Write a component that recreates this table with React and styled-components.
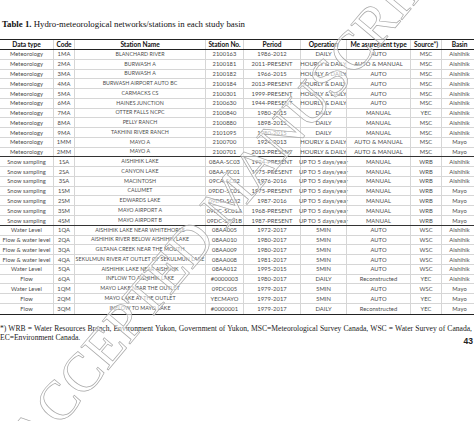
import React from 'react';
import styled, { createGlobalStyle } from 'styled-components';

const GlobalStyle = createGlobalStyle`
	html, body {
		margin: 0;
		padding: 0;
		background: #ffffff;
	}
`;

const Page = styled.div`
	position: relative;
	width: 474px;
	height: 421px;
	overflow: hidden;
	background: #ffffff;
	padding-top: 19px;
	box-sizing: border-box;
`;

const Caption = styled.div`
	font-family: "Liberation Serif", "Times New Roman", serif;
	font-size: 8.8px;
	line-height: 11px;
	color: #111;
	padding-left: 2px;
	margin-bottom: 9px;

	b {
		font-weight: bold;
	}
`;

const Table = styled.div`
	width: 477px;
	border-top: 1px solid #222;
	border-bottom: 1.5px solid #222;
`;

const cols = '53px 21px 131px 38px 57px 46px 64px 31px 36px';

const Row = styled.div`
	display: grid;
	grid-template-columns: ${cols};
	height: ${(p) => (p.$head ? '10px' : '9.78px')};
	box-sizing: border-box;
	border-bottom: ${(p) =>
		p.$head ? '1px solid #222' : p.$thick ? '1.5px solid #333' : '1px solid #d6d6d6'};
	&:last-child {
		border-bottom: none;
	}
`;

const Cell = styled.div`
	display: flex;
	align-items: center;
	justify-content: center;
	white-space: nowrap;
	overflow: visible;
	border-left: ${(p) => (p.$first ? 'none' : '1px solid #d6d6d6')};
	font-family: Lato, "Liberation Sans", Arial, sans-serif;
	font-size: ${(p) => (p.$head ? '6.6px' : p.$caps ? '5.3px' : '5.8px')};
	font-weight: ${(p) => (p.$head ? 'bold' : 'normal')};
	color: ${(p) => (p.$head ? '#111' : '#4c4c4c')};
	letter-spacing: ${(p) => (p.$head ? '-0.05px' : '0.05px')};
	line-height: 1;
`;

const Footnote = styled.p`
	margin: 9px 0 0 0;
	width: 472px;
	font-family: "Liberation Serif", "Times New Roman", serif;
	font-size: 7.6px;
	line-height: 9px;
	color: #222;
	text-align: justify;
`;

const PageNumber = styled.div`
	margin-top: -6px;
	padding-right: 1px;
	text-align: right;
	font-family: "Liberation Sans", Arial, sans-serif;
	font-size: 8.5px;
	font-weight: bold;
	color: #222;
`;

const Watermark = styled.div`
	position: absolute;
	left: 230px;
	top: 196px;
	transform: translate(-50%, -50%) rotate(-50deg);
	font-family: "Liberation Serif", "Times New Roman", serif;
	font-size: 55px;
	white-space: nowrap;
	color: rgba(255, 255, 255, 0.55);
	-webkit-text-stroke: 0.7px #a8a8a8;
	pointer-events: none;
`;

const header = ['Data type', 'Code', 'Station Name', 'Station No.', 'Period', 'Operation', 'Me asurement type', 'Source*)', 'Basin'];

const up5 = 'UP TO 5 days/year';
const hd = 'HOURLY & DAILY';

const rows = [
	['Meteorology', '1MA', 'BLANCHARD RIVER', '2100163', '1986-2012', 'DAILY', 'AUTO', 'MSC', 'Aishihik'],
	['Meteorology', '2MA', 'BURWASH A', '2100181', '2011-PRESENT', hd, 'AUTO & MANUAL', 'MSC', 'Aishihik'],
	['Meteorology', '3MA', 'BURWASH A', '2100182', '1966-2015', hd, 'AUTO', 'MSC', 'Aishihik'],
	['Meteorology', '4MA', 'BURWASH AIRPORT AUTO BC', '2100184', '2013-PRESENT', hd, 'AUTO', 'MSC', 'Aishihik'],
	['Meteorology', '5MA', 'CARMACKS CS', '2100301', '1999-PRESENT', hd, 'AUTO', 'MSC', 'Aishihik'],
	['Meteorology', '6MA', 'HAINES JUNCTION', '2100630', '1944-PRESENT', hd, 'AUTO', 'MSC', 'Aishihik'],
	['Meteorology', '7MA', 'OTTER FALLS NCPC', '2100840', '1980-2015', 'DAILY', 'MANUAL', 'YEC', 'Aishihik'],
	['Meteorology', '8MA', 'PELLY RANCH', '2100880', '1898-2015', 'DAILY', 'MANUAL', 'MSC', 'Aishihik'],
	['Meteorology', '9MA', 'TAKHINI RIVER RANCH', '2101095', '1980-2015', 'DAILY', 'MANUAL', 'MSC', 'Aishihik'],
	['Meteorology', '1MM', 'MAYO A', '2100700', '1924-2013', hd, 'AUTO & MANUAL', 'MSC', 'Mayo'],
	['Meteorology', '2MM', 'MAYO A', '2100701', '2013-PRESENT', hd, 'AUTO & MANUAL', 'MSC', 'Mayo', true],
	['Snow sampling', '1SA', 'AISHIHIK LAKE', '08AA-SC03', '1994-PRESENT', up5, 'MANUAL', 'WRB', 'Aishihik'],
	['Snow sampling', '2SA', 'CANYON LAKE', '08AA-SC01', '1975-PRESENT', up5, 'MANUAL', 'WRB', 'Aishihik'],
	['Snow sampling', '3SA', 'MACINTOSH', '09CA-SC02', '1976-2016', up5, 'MANUAL', 'WRB', 'Aishihik'],
	['Snow sampling', '1SM', 'CALUMET', '09DD-SC01', '1975-PRESENT', up5, 'MANUAL', 'WRB', 'Mayo'],
	['Snow sampling', '2SM', 'EDWARDS LAKE', '09DD-SC02', '1987-2016', up5, 'MANUAL', 'WRB', 'Mayo'],
	['Snow sampling', '3SM', 'MAYO AIRPORT A', '09DC-SC01A', '1968-PRESENT', up5, 'MANUAL', 'WRB', 'Mayo'],
	['Snow sampling', '4SM', 'MAYO AIRPORT B', '09DC-SC01B', '1987-PRESENT', up5, 'MANUAL', 'WRB', 'Mayo', true],
	['Water Level', '1QA', 'AISHIHIK LAKE NEAR WHITEHORSE', '08AA005', '1972-2017', '5MIN', 'AUTO', 'WSC', 'Aishihik'],
	['Flow & water level', '2QA', 'AISHIHIK RIVER BELOW AISHIHIK LAKE', '08AA010', '1980-2017', '5MIN', 'AUTO', 'WSC', 'Aishihik'],
	['Flow & water level', '3QA', 'GILTANA CREEK NEAR THE MOUTH', '08AA009', '1980-2017', '5MIN', 'AUTO', 'WSC', 'Aishihik'],
	['Flow & water level', '4QA', 'SEKULMUN RIVER AT OUTLET OF SEKULMUN LAKE', '08AA008', '1981-2017', '5MIN', 'AUTO', 'WSC', 'Aishihik'],
	['Water Level', '5QA', 'AISHIHIK LAKE NEAR AISHIHIK', '08AA012', '1995-2015', '5MIN', 'AUTO', 'WSC', 'Aishihik'],
	['Flow', '6QA', 'INFLOW TO AISHIHIK LAKE', '#0000003', '1980-2017', 'DAILY', 'Reconstructed', 'YEC', 'Aishihik'],
	['Water Level', '1QM', 'MAYO LAKE NEAR THE OUTLET', '09DC005', '1979-2017', '5MIN', 'AUTO', 'WSC', 'Mayo'],
	['Flow', '2QM', 'MAYO LAKE AT THE OUTLET', 'YECMAYO', '1979-2017', '5MIN', 'AUTO', 'YEC', 'Mayo'],
	['Flow', '3QM', 'INFLOW TO MAYO LAKE', '#0000001', '1979-2017', 'DAILY', 'Reconstructed', 'YEC', 'Mayo'],
];

export default function App() {
	return (
		<>
			<GlobalStyle />
			<Page>
				<Caption>
					<b>Table 1.</b> Hydro-meteorological networks/stations in each study basin
				</Caption>
				<Table>
					<Row $head>
						{header.map((h, i) => (
							<Cell key={h} $head $first={i === 0}>{h}</Cell>
						))}
					</Row>
					{rows.map((r, ri) => (
						<Row key={ri} $thick={r[9] === true}>
							{r.slice(0, 9).map((c, ci) => (
								<Cell key={ci} $first={ci === 0} $caps={ci === 2}>{c}</Cell>
							))}
						</Row>
					))}
				</Table>
				<Footnote>
					*) WRB = Water Resources Branch, Environment Yukon, Government of Yukon, MSC=Meteorological Survey Canada, WSC = Water Survey of Canada, EC=Environment Canada.
				</Footnote>
				<PageNumber>43</PageNumber>
				<Watermark>ACCEPTED MANUSCRIPT</Watermark>
			</Page>
		</>
	);
}
